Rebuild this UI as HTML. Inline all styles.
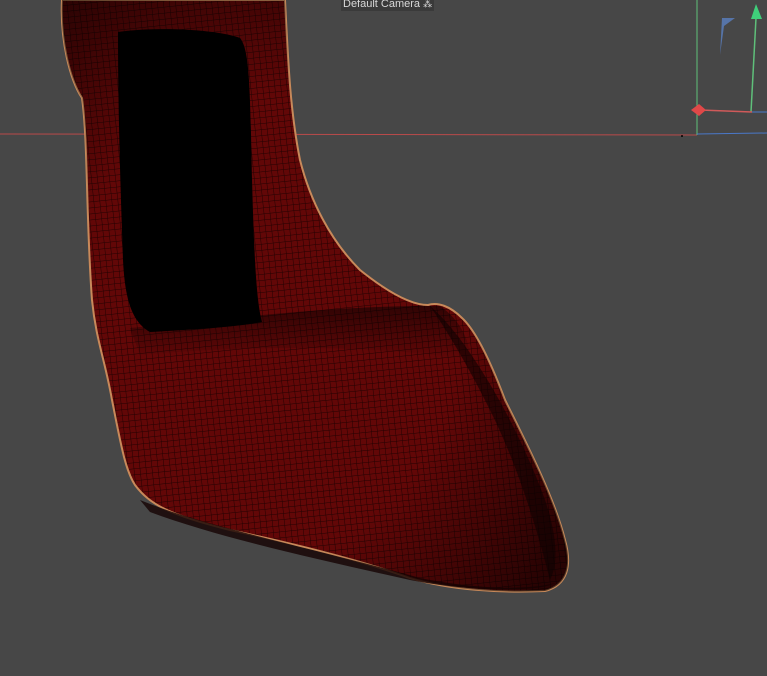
<!DOCTYPE html>
<html><head><style>
html,body{margin:0;padding:0;width:767px;height:676px;overflow:hidden;background:#484848}
.lbl{position:absolute;left:341px;top:-3px;height:14px;padding:0 2px;background:#3a3a3a;color:#d8d8d8;font:11px "Liberation Sans",sans-serif;line-height:14px}
</style></head><body>
<svg width="767" height="676" style="position:absolute;left:0;top:0">
<defs>
<pattern id="g" width="6" height="6" patternUnits="userSpaceOnUse" patternTransform="rotate(-6)">
<rect width="6" height="6" fill="#620707"/>
<path d="M0 0H6M0 0V6" stroke="#220202" stroke-width="1"/>
</pattern>
<radialGradient id="sh" cx="0.4" cy="0.55" r="0.7">
<stop offset="0.55" stop-color="#000" stop-opacity="0"/>
<stop offset="1" stop-color="#000" stop-opacity="0.6"/>
</radialGradient>
<linearGradient id="vb" x1="0" y1="0" x2="0" y2="1">
<stop offset="0" stop-color="#000" stop-opacity="0.5"/>
<stop offset="1" stop-color="#000" stop-opacity="0"/>
</linearGradient>
</defs>
<rect width="767" height="676" fill="#474747"/>
<line x1="0" y1="134" x2="697" y2="135" stroke="#b94a4a" stroke-width="1"/>
<path d="M62 0 C60 40 70 80 82 98 C88 140 86 220 92 300 C96 340 105 360 112 400 C120 440 125 470 135 485 C150 505 170 515 230 530 C300 545 360 560 410 578 C450 590 500 593 545 591 C568 585 572 565 565 540 C555 500 530 450 505 400 C490 360 475 330 462 318 C450 306 438 302 428 305 C410 305 385 290 360 270 C330 240 310 200 300 160 C290 110 288 60 285 0 Z" fill="url(#g)" stroke="#c8895a" stroke-width="2"/>
<path d="M62 0 C60 40 70 80 82 98 C88 140 86 220 92 300 C96 340 105 360 112 400 C120 440 125 470 135 485 C150 505 170 515 230 530 C300 545 360 560 410 578 C450 590 500 593 545 591 C568 585 572 565 565 540 C555 500 530 450 505 400 C490 360 475 330 462 318 C450 306 438 302 428 305 C410 305 385 290 360 270 C330 240 310 200 300 160 C290 110 288 60 285 0 Z" fill="url(#sh)"/>
<path d="M130 328 C220 320 330 305 440 306 C460 320 470 340 470 360 C380 345 250 345 140 355 Z" fill="url(#vb)"/>
<path d="M140 500 C200 525 300 545 420 578 C480 590 530 590 555 583 C540 592 470 592 410 580 C320 560 220 538 150 512 Z" fill="#150202" opacity="0.8"/>
<path d="M430 306 C470 340 520 430 545 500 C555 530 560 560 550 580 C540 540 520 470 490 410 C470 370 450 335 430 306 Z" fill="#0d0101" opacity="0.6"/>
<path d="M118 32 C160 26 220 30 240 38 C250 50 250 90 252 180 C254 250 256 300 262 322 C230 328 180 330 150 332 C132 322 125 300 123 260 C121 200 118 120 118 32 Z" fill="#000"/>
<line x1="697" y1="0" x2="697" y2="135" stroke="#5fc07a" stroke-width="1"/>
<line x1="756" y1="18" x2="751" y2="112" stroke="#5fc07a" stroke-width="1.5"/>
<polygon points="756,4 751,19 762,19" fill="#3fcf7a"/>
<line x1="700" y1="110" x2="752" y2="112" stroke="#d05a5a" stroke-width="1.5"/>
<polygon points="691,110 699,104 706,110 699,116" fill="#e04848"/>
<line x1="752" y1="112" x2="767" y2="112" stroke="#4a78c8" stroke-width="1"/>
<line x1="697" y1="134" x2="767" y2="133" stroke="#4a78c8" stroke-width="1"/>
<path d="M720 55 L722 18 L735 18 L724 26 Z" fill="#5a7fc0" opacity="0.8"/>
<circle cx="682" cy="136" r="1" fill="#000"/>
</svg>
<div class="lbl">Default Camera <span style="font-size:9px">⁂</span></div>
</body></html>
